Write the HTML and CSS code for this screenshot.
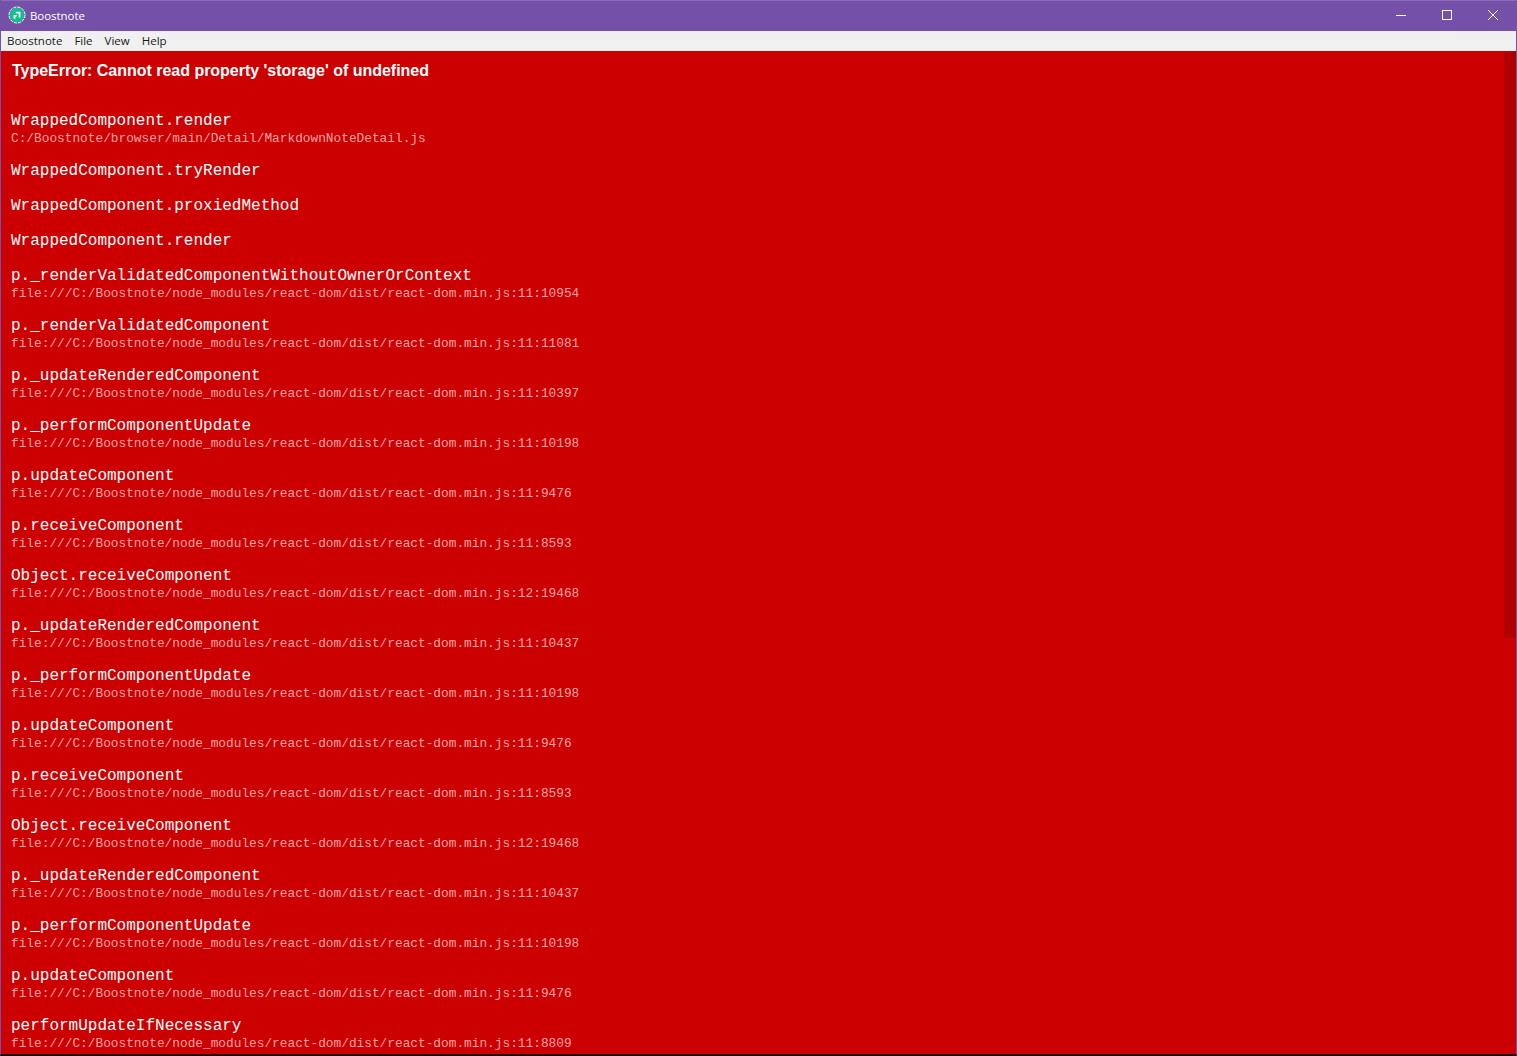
FILE: index.html
```html
<!DOCTYPE html>
<html lang="en">
<head>
<meta charset="utf-8">
<title>Boostnote</title>
<link rel="stylesheet" href="styles.css">
</head>
<body>
<div class="window">
  <header class="titlebar">
    <svg class="app-icon" width="18" height="18" viewBox="0 0 18 18">
      <circle cx="9" cy="9" r="7.5" fill="#12bf8f"/>
      <circle cx="9" cy="9" r="8" fill="none" stroke="#fff" stroke-width="1" stroke-dasharray="3.2 1"/>
      <path d="M7.8 5.8h4.6v5.8h-1.7V7.6H7.8zM5.6 9h3v1.5H7.4v2.2H5.6z" fill="#fff"/>
    </svg>
    <span class="app-title">Boostnote</span>
    <div class="controls">
      <span class="control"><svg width="12" height="12" viewBox="0 0 12 12"><path d="M1 6.5h10" stroke="#fff" fill="none"/></svg></span>
      <span class="control"><svg width="12" height="12" viewBox="0 0 12 12"><rect x="1.5" y="1.5" width="9" height="9" stroke="#fff" fill="none"/></svg></span>
      <span class="control"><svg width="12" height="12" viewBox="0 0 12 12"><path d="M1 1l10 10M11 1L1 11" stroke="#fff" fill="none"/></svg></span>
    </div>
  </header>
  <nav class="menubar">
    <span>Boostnote</span><span>File</span><span>View</span><span>Help</span>
  </nav>
  <main class="error">
    <div class="content">
      <h1 class="message">TypeError: Cannot read property 'storage' of undefined</h1>
      <div class="stack">
        <div class="frame"><div class="fn">WrappedComponent.render</div><div class="file">C:/Boostnote/browser/main/Detail/MarkdownNoteDetail.js</div></div>
        <div class="frame"><div class="fn">WrappedComponent.tryRender</div></div>
        <div class="frame"><div class="fn">WrappedComponent.proxiedMethod</div></div>
        <div class="frame"><div class="fn">WrappedComponent.render</div></div>
        <div class="frame"><div class="fn">p._renderValidatedComponentWithoutOwnerOrContext</div><div class="file">file:///C:/Boostnote/node_modules/react-dom/dist/react-dom.min.js:11:10954</div></div>
        <div class="frame"><div class="fn">p._renderValidatedComponent</div><div class="file">file:///C:/Boostnote/node_modules/react-dom/dist/react-dom.min.js:11:11081</div></div>
        <div class="frame"><div class="fn">p._updateRenderedComponent</div><div class="file">file:///C:/Boostnote/node_modules/react-dom/dist/react-dom.min.js:11:10397</div></div>
        <div class="frame"><div class="fn">p._performComponentUpdate</div><div class="file">file:///C:/Boostnote/node_modules/react-dom/dist/react-dom.min.js:11:10198</div></div>
        <div class="frame"><div class="fn">p.updateComponent</div><div class="file">file:///C:/Boostnote/node_modules/react-dom/dist/react-dom.min.js:11:9476</div></div>
        <div class="frame"><div class="fn">p.receiveComponent</div><div class="file">file:///C:/Boostnote/node_modules/react-dom/dist/react-dom.min.js:11:8593</div></div>
        <div class="frame"><div class="fn">Object.receiveComponent</div><div class="file">file:///C:/Boostnote/node_modules/react-dom/dist/react-dom.min.js:12:19468</div></div>
        <div class="frame"><div class="fn">p._updateRenderedComponent</div><div class="file">file:///C:/Boostnote/node_modules/react-dom/dist/react-dom.min.js:11:10437</div></div>
        <div class="frame"><div class="fn">p._performComponentUpdate</div><div class="file">file:///C:/Boostnote/node_modules/react-dom/dist/react-dom.min.js:11:10198</div></div>
        <div class="frame"><div class="fn">p.updateComponent</div><div class="file">file:///C:/Boostnote/node_modules/react-dom/dist/react-dom.min.js:11:9476</div></div>
        <div class="frame"><div class="fn">p.receiveComponent</div><div class="file">file:///C:/Boostnote/node_modules/react-dom/dist/react-dom.min.js:11:8593</div></div>
        <div class="frame"><div class="fn">Object.receiveComponent</div><div class="file">file:///C:/Boostnote/node_modules/react-dom/dist/react-dom.min.js:12:19468</div></div>
        <div class="frame"><div class="fn">p._updateRenderedComponent</div><div class="file">file:///C:/Boostnote/node_modules/react-dom/dist/react-dom.min.js:11:10437</div></div>
        <div class="frame"><div class="fn">p._performComponentUpdate</div><div class="file">file:///C:/Boostnote/node_modules/react-dom/dist/react-dom.min.js:11:10198</div></div>
        <div class="frame"><div class="fn">p.updateComponent</div><div class="file">file:///C:/Boostnote/node_modules/react-dom/dist/react-dom.min.js:11:9476</div></div>
        <div class="frame"><div class="fn">performUpdateIfNecessary</div><div class="file">file:///C:/Boostnote/node_modules/react-dom/dist/react-dom.min.js:11:8809</div></div>
      </div>
    </div>
    <div class="scrollbar"><div class="thumb"></div></div>
  </main>
</div>
</body>
</html>
```
FILE: styles.css
```css
html, body {
  margin: 0;
  height: 100%;
  overflow: hidden;
}

.window {
  box-sizing: border-box;
  height: 1056px;
  display: flex;
  flex-direction: column;
  background: #7550a8;
  border-left: 1px solid #7550a8;
  border-right: 1px solid #7550a8;
  border-bottom: 2px solid #1a0505;
  font-family: "Open Sans", "Liberation Sans", sans-serif;
}

.titlebar {
  flex: 0 0 31px;
  display: flex;
  align-items: center;
  padding-bottom: 2px;
  color: #fff;
  font-size: 11.4px;
  background: #7550a8;
  border-top: 1px solid #8a6cb8;
  box-sizing: border-box;
}

.app-icon {
  margin-left: 7px;
  flex: none;
}

.app-title {
  margin-left: 4px;
}

.controls {
  margin-left: auto;
  display: flex;
}

.control {
  width: 46px;
  height: 28px;
  display: flex;
  align-items: center;
  justify-content: center;
}

.menubar {
  flex: 0 0 20px;
  display: flex;
  align-items: center;
  gap: 12px;
  padding-left: 6px;
  padding-bottom: 1px;
  box-sizing: border-box;
  background: #f0f0f0;
  color: #1a1a1a;
  font-size: 11.5px;
}

.error {
  flex: 1;
  min-height: 0;
  display: flex;
  background: #cc0000;
  overflow: hidden;
}

.content {
  flex: 1;
  min-width: 0;
  padding: 10px;
  color: #fff;
}

.message {
  margin: 0 0 32px 1px;
  letter-spacing: -0.02px;
  font: bold 16px/20px "Liberation Sans", Arial, sans-serif;
}

.frame {
  padding-bottom: 17px;
}

.fn {
  margin-bottom: 2px;
  font: 16px/16px "Liberation Mono", "Courier New", monospace;
  white-space: nowrap;
}

.file {
  font: 12.8px/15px "Liberation Mono", "Courier New", monospace;
  color: #f5a3a3;
  white-space: nowrap;
}

.scrollbar {
  flex: 0 0 12px;
}

.thumb {
  height: 587px;
  background: #b00000;
}
```
